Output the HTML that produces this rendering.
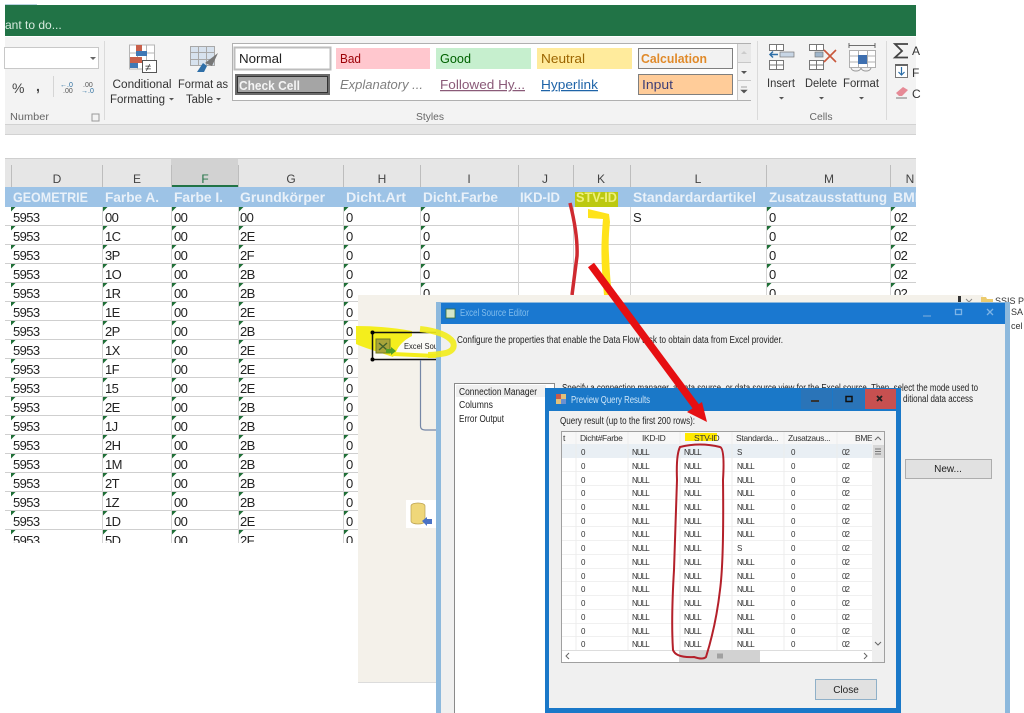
<!DOCTYPE html>
<html><head><meta charset="utf-8"><style>
html,body{margin:0;padding:0;background:#fff;width:1024px;height:713px;overflow:hidden}
svg{display:block;filter:blur(.3px)}
text{font-family:"Liberation Sans",sans-serif}
.c{font-size:13px;fill:#222;letter-spacing:-.6px}
.h{font-size:14px;font-weight:bold;fill:#e9f1f9}
.l{font-size:12px;fill:#444;text-anchor:middle}
.s{font-size:12.5px}
.g{font-size:8px;fill:#333;letter-spacing:-.9px}
.gh{font-size:8.5px;fill:#333;letter-spacing:-.35px}
.d{font-size:10px;fill:#222}
</style></head><body>
<svg width="1024" height="713" viewBox="0 0 1024 713" xmlns="http://www.w3.org/2000/svg">
<defs>
<pattern id="tri" x="0" y="207" width="6" height="19" patternUnits="userSpaceOnUse"><path d="M0 0h4.500L0 4.500z" fill="#1e6e36"/></pattern>
<clipPath id="xl"><path d="M0 0H916V295H358V543H0z"/></clipPath>
<clipPath id="tb"><rect x="562" y="432" width="310" height="218"/></clipPath>
</defs>
<rect width="1024" height="713" fill="#fff"/>
<!-- Excel -->
<rect x="5" y="5" width="911" height="31" fill="#217346"/>
<rect x="5" y="4" width="32" height="1" fill="#b9d3e0"/>
<text x="5" y="29" font-size="12" fill="#d8eadf">ant to do...</text>
<rect x="5" y="37" width="911" height="88" fill="#f3f3f3"/>
<rect x="5" y="125" width="911" height="10" fill="#e6e6e6"/>
<path d="M5 124.500H916M5 134.500H916" stroke="#d2d2d2"/>
<rect x="5" y="158" width="911" height="29" fill="#e6e6e6"/>
<path d="M5 158.500H916" stroke="#cfcfcf"/>
<!-- number group -->
<rect x="4.500" y="47.500" width="94" height="21" fill="#fff" stroke="#c8c8c8"/>
<path d="M90 57h6l-3 3z" fill="#666"/>
<text x="12" y="93" font-size="14" fill="#444">%</text>
<text x="36" y="91" font-size="14" font-weight="bold" fill="#444">,</text>
<path d="M53.500 76V97" stroke="#d5d5d5"/>
<text x="60" y="87" font-size="7" fill="#2a6d9e">←.0</text><text x="63" y="93" font-size="7" fill="#555">.00</text>
<text x="83" y="87" font-size="7" fill="#555">.00</text><text x="81" y="93" font-size="7" fill="#2a6d9e">→.0</text>
<text x="10" y="120" font-size="10.500" fill="#666" textLength="39" lengthAdjust="spacingAndGlyphs">Number</text>
<rect x="92" y="114" width="7" height="7" fill="none" stroke="#999"/>
<path d="M104.500 41V120" stroke="#dadada"/>
<!-- cond formatting icon -->
<path d="M129.500 45h25v24h-25zM129.500 53h25M129.500 61h25M137.500 45v24M146.500 45v24" fill="#fff" stroke="#b5b5b5"/>
<rect x="136" y="45" width="6" height="7" fill="#c9604a"/><rect x="136" y="51" width="11" height="5" fill="#3f78b5"/><rect x="130" y="57" width="12" height="6" fill="#c9604a"/><rect x="130" y="63" width="8" height="5" fill="#3f78b5"/>
<rect x="142.500" y="60.500" width="14" height="12" fill="#fff" stroke="#555"/>
<text x="145" y="71" font-size="11" fill="#333">≠</text>
<text x="142" y="88" font-size="11.500" fill="#333" text-anchor="middle" textLength="59" lengthAdjust="spacingAndGlyphs">Conditional</text>
<text x="110" y="103" font-size="11.500" fill="#333" textLength="55" lengthAdjust="spacingAndGlyphs">Formatting</text><path d="M169 98h5l-2.500 2.500z" fill="#555"/>
<!-- format as table icon -->
<path d="M190.500 46.500h24v19h-24zM190.500 52.500h24M190.500 59.500h24M198.500 46.500v19M206.500 46.500v19" fill="#d7e2ee" stroke="#a8a8a8"/>
<path d="M197 72l6-9 4 3-3 6z" fill="#2f6fa8"/><path d="M205 63l13-10-6 13z" fill="#777"/>
<text x="178" y="88" font-size="11.500" fill="#333" textLength="50" lengthAdjust="spacingAndGlyphs">Format as</text>
<text x="186" y="103" font-size="11.500" fill="#333" textLength="27" lengthAdjust="spacingAndGlyphs">Table</text><path d="M216 98h5l-2.500 2.500z" fill="#555"/>
<!-- gallery -->
<rect x="232.500" y="43.500" width="518" height="57" fill="#fff" stroke="#b0b0b0"/>
<rect x="234.500" y="47.500" width="96" height="22" fill="#fff" stroke="#bdbdbd" stroke-width="2"/>
<text x="239" y="63" class="s" fill="#222" textLength="43" lengthAdjust="spacingAndGlyphs">Normal</text>
<rect x="336" y="48" width="94" height="21" fill="#ffc7ce"/><text x="340" y="63" class="s" fill="#9c0006" textLength="21" lengthAdjust="spacingAndGlyphs">Bad</text>
<rect x="436" y="48" width="95" height="21" fill="#c6efce"/><text x="440" y="63" class="s" fill="#006100" textLength="31" lengthAdjust="spacingAndGlyphs">Good</text>
<rect x="537" y="48" width="95" height="21" fill="#ffeb9c"/><text x="541" y="63" class="s" fill="#9c6500" textLength="44" lengthAdjust="spacingAndGlyphs">Neutral</text>
<rect x="638.500" y="48.500" width="94" height="20" fill="#f2f2f2" stroke="#7f7f7f"/><text x="641" y="63" class="s" font-weight="bold" fill="#e08a2a" textLength="66" lengthAdjust="spacingAndGlyphs">Calculation</text>
<rect x="235" y="74" width="95" height="21" fill="#6b6b6b"/><rect x="237.500" y="76.500" width="90" height="16" fill="#a5a5a5" stroke="#333"/><text x="239" y="90" class="s" font-weight="bold" fill="#f4f4f4" textLength="61" lengthAdjust="spacingAndGlyphs">Check Cell</text>
<text x="340" y="89" class="s" font-style="italic" fill="#7f7f7f" textLength="83" lengthAdjust="spacingAndGlyphs">Explanatory ...</text>
<text x="440" y="89" class="s" fill="#8a5a78" text-decoration="underline" textLength="85" lengthAdjust="spacingAndGlyphs">Followed Hy...</text>
<text x="541" y="89" class="s" fill="#1f64a8" text-decoration="underline" textLength="57" lengthAdjust="spacingAndGlyphs">Hyperlink</text>
<rect x="638.500" y="74.500" width="94" height="20" fill="#ffcc99" stroke="#7f7f7f"/><text x="642" y="89" class="s" fill="#3f3f76" textLength="31" lengthAdjust="spacingAndGlyphs">Input</text>
<rect x="737" y="44" width="14" height="56" fill="#f3f3f3"/><path d="M737.500 44V100M737.500 62.500H751M737.500 80.500H751" stroke="#c8c8c8"/><rect x="738" y="44" width="13" height="18" fill="#e8e8e8"/>
<path d="M741 54l3-3 3 3z" fill="#ccc"/><path d="M741 71h6l-3 3z" fill="#555"/><path d="M741 87h6M741 90h6l-3 3z" fill="#555" stroke="#555" stroke-width=".6"/>
<text x="430" y="120" font-size="10.500" fill="#666" text-anchor="middle" textLength="28" lengthAdjust="spacingAndGlyphs">Styles</text>
<path d="M757.500 41V120" stroke="#dadada"/>
<!-- cells icons -->
<path d="M769.500 44.500h14v6h-14zM776.500 44.500v6M769.500 60.500h14v9h-14zM769.500 65h14M776.500 60.500v9" fill="#fff" stroke="#777"/>
<rect x="780" y="52" width="14" height="5" fill="#c8d6e5" stroke="#777" stroke-width=".7"/><path d="M770 54.500h8M773 51.500l-3 3 3 3" fill="none" stroke="#2f6fa8" stroke-width="1.500"/>
<path d="M809.500 44.500h14v6h-14zM816.500 44.500v6M809.500 60.500h14v9h-14zM816.500 60.500v9M809.500 65h14" fill="#fff" stroke="#777"/>
<rect x="815" y="52" width="8" height="5" fill="#9fb6cc" stroke="#777" stroke-width=".7"/><path d="M824 50l12 12M836 50l-12 12" stroke="#c9583c" stroke-width="1.600"/>
<path d="M849.500 50.500h26v17h-26zM849.500 56h26M849.500 62h26M858.500 50.500v17M867.500 50.500v17" fill="#fff" stroke="#b0b0b0"/>
<rect x="858" y="55" width="9" height="9" fill="#3f70b0"/><path d="M849 45.500h26M849 43v5M875 43v5" stroke="#444" fill="none" stroke-width=".8"/>
<path d="M851 68c1 4 9 4 10 0M861 68c1 4 9 4 10 0" fill="none" stroke="#999"/>
<text x="781" y="87" font-size="11.500" fill="#333" text-anchor="middle" textLength="28" lengthAdjust="spacingAndGlyphs">Insert</text>
<text x="821" y="87" font-size="11.500" fill="#333" text-anchor="middle" textLength="32" lengthAdjust="spacingAndGlyphs">Delete</text>
<text x="861" y="87" font-size="11.500" fill="#333" text-anchor="middle" textLength="36" lengthAdjust="spacingAndGlyphs">Format</text>
<path d="M779 97h5l-2.500 2.500zM819 97h5l-2.500 2.500zM859 97h5l-2.500 2.500z" fill="#555"/>
<text x="821" y="120" font-size="10.500" fill="#666" text-anchor="middle" textLength="23" lengthAdjust="spacingAndGlyphs">Cells</text>
<path d="M886.500 41V120" stroke="#dadada"/>
<path d="M908 44h-13l7 7-7 6.500h13" fill="none" stroke="#444" stroke-width="1.800"/>
<text x="912" y="55" font-size="12" fill="#333">A</text>
<rect x="895.500" y="64.500" width="12" height="13" fill="#fff" stroke="#777"/><rect x="895" y="64" width="13" height="2" fill="#666"/><path d="M901.500 67v8M898.500 72l3 3 3-3" fill="none" stroke="#2a6da8" stroke-width="1.200"/>
<text x="912" y="77" font-size="12" fill="#333">F</text>
<path d="M896 93l7-6 5 3-6 6h-3z" fill="#e68a96"/><path d="M896 98h11" stroke="#777"/>
<text x="912" y="98" font-size="12" fill="#333">C</text>
<!-- sheet -->
<g clip-path="url(#xl)">
<rect x="171" y="159" width="67" height="27" fill="#d2d2d2"/><rect x="171" y="185" width="67" height="2" fill="#217346"/>
<path d="M11.500 165V187M102.500 165V187M171.500 165V187M238.500 165V187M343.500 165V187M420.500 165V187M518.500 165V187M573.500 165V187M630.500 165V187M766.500 165V187M890.500 165V187" stroke="#bdbdbd"/>
<g class="l">
<text x="57" y="183">D</text><text x="137" y="183">E</text><text x="205" y="183" fill="#217346">F</text><text x="291" y="183">G</text><text x="382" y="183">H</text><text x="469" y="183">I</text><text x="545" y="183">J</text><text x="601" y="183">K</text><text x="698" y="183">L</text><text x="829" y="183">M</text><text x="910" y="183">N</text>
</g>
<rect x="5" y="187" width="911" height="20" fill="#9dc3e6"/>
<rect x="575" y="192" width="43" height="15" fill="#bcc910"/>
<g class="h">
<text x="13" y="202" textLength="75" lengthAdjust="spacingAndGlyphs">GEOMETRIE</text>
<text x="105" y="202" textLength="54" lengthAdjust="spacingAndGlyphs">Farbe A.</text>
<text x="174" y="202" textLength="49" lengthAdjust="spacingAndGlyphs">Farbe I.</text>
<text x="240" y="202" textLength="85" lengthAdjust="spacingAndGlyphs">Grundkörper</text>
<text x="346" y="202" textLength="60" lengthAdjust="spacingAndGlyphs">Dicht.Art</text>
<text x="423" y="202" textLength="75" lengthAdjust="spacingAndGlyphs">Dicht.Farbe</text>
<text x="520" y="202" textLength="40" lengthAdjust="spacingAndGlyphs">IKD-ID</text>
<text x="576" y="202" textLength="41" lengthAdjust="spacingAndGlyphs" style="fill:#eef07a">STV-ID</text>
<text x="633" y="202" textLength="123" lengthAdjust="spacingAndGlyphs">Standardardartikel</text>
<text x="769" y="202" textLength="118" lengthAdjust="spacingAndGlyphs">Zusatzausstattung</text>
<text x="893" y="202">BME</text>
</g>
<path d="M5 225.500H916M5 244.500H916M5 263.500H916M5 282.500H916M5 301.500H916M5 320.500H916M5 339.500H916M5 358.500H916M5 377.500H916M5 396.500H916M5 415.500H916M5 434.500H916M5 453.500H916M5 472.500H916M5 491.500H916M5 510.500H916M5 529.500H916" stroke="#cfcfcf"/>
<path d="M102.500 207V550M171.500 207V550M238.500 207V550M343.500 207V550M420.500 207V550M518.500 207V550M573.500 207V550M630.500 207V550M766.500 207V550M890.500 207V550" stroke="#d4d4d4"/>
<rect transform="translate(11 0)" y="207" width="5" height="340" fill="url(#tri)"/><rect transform="translate(103 0)" y="207" width="5" height="340" fill="url(#tri)"/><rect transform="translate(172 0)" y="207" width="5" height="340" fill="url(#tri)"/><rect transform="translate(239 0)" y="207" width="5" height="340" fill="url(#tri)"/><rect transform="translate(344 0)" y="207" width="5" height="340" fill="url(#tri)"/><rect transform="translate(421 0)" y="207" width="5" height="340" fill="url(#tri)"/><rect transform="translate(767 0)" y="207" width="5" height="340" fill="url(#tri)"/><rect transform="translate(891 0)" y="207" width="5" height="340" fill="url(#tri)"/>
<g class="c">
<text y="222"><tspan x="13">5953</tspan><tspan x="105">00</tspan><tspan x="174">00</tspan><tspan x="240">00</tspan><tspan x="346">0</tspan><tspan x="423">0</tspan><tspan x="633">S</tspan><tspan x="769">0</tspan><tspan x="894">02</tspan></text>
<text y="241"><tspan x="13">5953</tspan><tspan x="105">1C</tspan><tspan x="174">00</tspan><tspan x="240">2E</tspan><tspan x="346">0</tspan><tspan x="423">0</tspan><tspan x="769">0</tspan><tspan x="894">02</tspan></text>
<text y="260"><tspan x="13">5953</tspan><tspan x="105">3P</tspan><tspan x="174">00</tspan><tspan x="240">2F</tspan><tspan x="346">0</tspan><tspan x="423">0</tspan><tspan x="769">0</tspan><tspan x="894">02</tspan></text>
<text y="279"><tspan x="13">5953</tspan><tspan x="105">1O</tspan><tspan x="174">00</tspan><tspan x="240">2B</tspan><tspan x="346">0</tspan><tspan x="423">0</tspan><tspan x="769">0</tspan><tspan x="894">02</tspan></text>
<text y="298"><tspan x="13">5953</tspan><tspan x="105">1R</tspan><tspan x="174">00</tspan><tspan x="240">2B</tspan><tspan x="346">0</tspan><tspan x="423">0</tspan><tspan x="769">0</tspan><tspan x="894">02</tspan></text>
<text y="317"><tspan x="13">5953</tspan><tspan x="105">1E</tspan><tspan x="174">00</tspan><tspan x="240">2E</tspan><tspan x="346">0</tspan></text>
<text y="336"><tspan x="13">5953</tspan><tspan x="105">2P</tspan><tspan x="174">00</tspan><tspan x="240">2B</tspan><tspan x="346">0</tspan></text>
<text y="355"><tspan x="13">5953</tspan><tspan x="105">1X</tspan><tspan x="174">00</tspan><tspan x="240">2E</tspan><tspan x="346">0</tspan></text>
<text y="374"><tspan x="13">5953</tspan><tspan x="105">1F</tspan><tspan x="174">00</tspan><tspan x="240">2E</tspan><tspan x="346">0</tspan></text>
<text y="393"><tspan x="13">5953</tspan><tspan x="105">15</tspan><tspan x="174">00</tspan><tspan x="240">2E</tspan><tspan x="346">0</tspan></text>
<text y="412"><tspan x="13">5953</tspan><tspan x="105">2E</tspan><tspan x="174">00</tspan><tspan x="240">2B</tspan><tspan x="346">0</tspan></text>
<text y="431"><tspan x="13">5953</tspan><tspan x="105">1J</tspan><tspan x="174">00</tspan><tspan x="240">2B</tspan><tspan x="346">0</tspan></text>
<text y="450"><tspan x="13">5953</tspan><tspan x="105">2H</tspan><tspan x="174">00</tspan><tspan x="240">2B</tspan><tspan x="346">0</tspan></text>
<text y="469"><tspan x="13">5953</tspan><tspan x="105">1M</tspan><tspan x="174">00</tspan><tspan x="240">2B</tspan><tspan x="346">0</tspan></text>
<text y="488"><tspan x="13">5953</tspan><tspan x="105">2T</tspan><tspan x="174">00</tspan><tspan x="240">2B</tspan><tspan x="346">0</tspan></text>
<text y="507"><tspan x="13">5953</tspan><tspan x="105">1Z</tspan><tspan x="174">00</tspan><tspan x="240">2B</tspan><tspan x="346">0</tspan></text>
<text y="526"><tspan x="13">5953</tspan><tspan x="105">1D</tspan><tspan x="174">00</tspan><tspan x="240">2E</tspan><tspan x="346">0</tspan></text>
<text y="545"><tspan x="13">5953</tspan><tspan x="105">5D</tspan><tspan x="174">00</tspan><tspan x="240">2F</tspan><tspan x="346">0</tspan></text>
</g>
</g>
<!-- yellow/red marks on sheet -->
<path d="M588 209L609 214L610 222Q608 240 609 255Q610 280 612 295H604Q601 265 601.500 245Q602 230 603 219L588 218Z" fill="#ffe31a"/>
<path d="M570 203Q578 235 577 256L572 295" fill="none" stroke="#cf2a30" stroke-width="3.500"/>
<!-- SSIS background -->
<rect x="358" y="295" width="625" height="388" fill="#f4f1ea"/>
<path d="M358 682.500H436" stroke="#dcdcdc"/>
<rect x="958" y="296" width="3" height="9" fill="#333"/><path d="M966 299l3 3 3-3" fill="none" stroke="#888"/>
<path d="M981 297h5l1 2h6v6h-12z" fill="#eccb6e"/>
<text x="995" y="304" font-size="9" fill="#333">SSIS Pa</text><text x="1011" y="315" font-size="9" fill="#333">SA</text><text x="1011" y="329" font-size="9" fill="#333">cel</text>
<!-- node -->
<rect x="372" y="333" width="64" height="27" fill="#fbfbf6"/>
<path d="M356 326Q385 326 412 331L412 336Q400 342 396 352L393 357L372 350Q360 346 356 344Z" fill="#f4ee1c"/>
<path d="M393 352L436 354V358L393 356Z" fill="#f4ee1c"/>
<path d="M372.500 332.500H436M372.500 332.500V359.500H436" fill="none" stroke="#111" stroke-width="1.500"/>
<circle cx="372.500" cy="332.500" r="2" fill="#000"/><circle cx="372.500" cy="359.500" r="2" fill="#000"/>
<rect x="376" y="339" width="14" height="14" fill="#a9a53a" stroke="#6f7a25"/><path d="M379 343l8 7M387 343l-8 7" stroke="#41602a" stroke-width="1.300"/>
<path d="M386 349h5v-2l5 4-5 4v-2h-5z" fill="#4f9e28"/>
<text x="404" y="349" font-size="8.500" fill="#222" textLength="34" lengthAdjust="spacingAndGlyphs">Excel Sou</text>
<path d="M420.500 360V426Q420.500 430 425 430H438" fill="none" stroke="#7587a6" stroke-width="1.200"/>
<rect x="406" y="500" width="32" height="28" fill="#fff"/>
<path d="M411 506c0-4 14-4 14 0v15c0 4-14 4-14 0z" fill="#efd77a" stroke="#b9a050" stroke-width=".7"/>
<path d="M422 521l5-4v2h5v5h-5v2z" fill="#4a72c4"/>
<!-- Editor -->
<rect x="436" y="302" width="574" height="411" fill="#8db9dd"/>
<rect x="441" y="324" width="564" height="389" fill="#f0f0f0"/>
<rect x="441" y="303" width="564" height="21" fill="#1a78d0"/>
<rect x="446" y="309" width="9" height="9" fill="#d4e6c8" stroke="#37703a" stroke-width=".8"/>
<text x="460" y="316" font-size="10" fill="#82bdec" textLength="69" lengthAdjust="spacingAndGlyphs">Excel Source Editor</text>
<path d="M923 316h8" stroke="#5f9ed8" stroke-width="1.500"/><rect x="955.500" y="309.500" width="6" height="5" fill="none" stroke="#7db4e6" stroke-width="1.300"/><path d="M987 309l6 6M993 309l-6 6" stroke="#7db4e6" stroke-width="1.300"/>
<text x="457" y="343" class="d" textLength="326" lengthAdjust="spacingAndGlyphs">Configure the properties that enable the Data Flow task to obtain data from Excel provider.</text>
<rect x="454.500" y="383.500" width="100" height="340" fill="#fff" stroke="#8a8a8a"/>
<rect x="456" y="385" width="90" height="12" fill="#f0f0f0"/>
<text x="459" y="395" class="d" textLength="78" lengthAdjust="spacingAndGlyphs">Connection Manager</text>
<text x="459" y="408" class="d" textLength="34" lengthAdjust="spacingAndGlyphs">Columns</text>
<text x="459" y="422" class="d" textLength="45" lengthAdjust="spacingAndGlyphs">Error Output</text>
<text x="562" y="391" class="d" textLength="416" lengthAdjust="spacingAndGlyphs">Specify a connection manager, a data source, or data source view for the Excel source. Then, select the mode used to</text>
<text x="903" y="402" class="d" textLength="70" lengthAdjust="spacingAndGlyphs">ditional data access</text>
<rect x="905.500" y="459.500" width="86" height="19" fill="#e1e1e1" stroke="#adadad"/>
<text x="948" y="472" class="d" text-anchor="middle">New...</text>
<!-- yellow loop over editor border -->
<path d="M420 329Q446 332 453 342Q456 350 446 353Q436 355 428 355" fill="none" stroke="#f2ec1a" stroke-width="6" opacity=".9"/>
<!-- Preview -->
<rect x="545" y="388" width="356" height="325" fill="#1a78c8"/>
<rect x="549" y="411" width="347" height="297" fill="#f0f0f0"/>
<rect x="801" y="389" width="31" height="20" fill="#2a74b8"/><rect x="833" y="389" width="31" height="20" fill="#2a74b8"/><rect x="865" y="389" width="31" height="20" fill="#c75050"/>
<path d="M811 401h8" stroke="#333" stroke-width="2"/><rect x="846" y="396.500" width="6" height="5" fill="none" stroke="#111" stroke-width="1.500"/><path d="M877 396l5 5M882 396l-5 5" stroke="#222" stroke-width="1.800"/>
<rect x="556" y="394" width="10" height="10" fill="#e0c07a"/><rect x="556" y="394" width="5" height="5" fill="#c95a4a"/><rect x="561" y="399" width="5" height="5" fill="#6a90d0"/>
<text x="571" y="403" font-size="10.500" fill="#cfe6f8" textLength="79" lengthAdjust="spacingAndGlyphs">Preview Query Results</text>
<text x="560" y="424" class="d" textLength="135" lengthAdjust="spacingAndGlyphs">Query result (up to the first 200 rows):</text>
<rect x="561.500" y="431.500" width="323" height="231" fill="#fff" stroke="#a0a0a0"/>
<rect x="562" y="432" width="310" height="12" fill="#f7f7f7"/>
<rect x="562" y="444" width="310" height="14" fill="#e9eff4"/>
<path d="M562 471.500H872M562 485.500H872M562 499.500H872M562 513.500H872M562 526.500H872M562 540.500H872M562 554.500H872M562 568.500H872M562 581.500H872M562 595.500H872M562 609.500H872M562 623.500H872M562 636.500H872" stroke="#f0f0f0"/>
<path d="M576 432V650M628 432V650M680 432V650M732 432V650M784 432V650M837 432V650" stroke="#ececec"/>
<rect x="685" y="433" width="32" height="8" fill="#ffe800"/>
<g clip-path="url(#tb)">
<text y="441" class="gh"><tspan x="563">t</tspan><tspan x="580">Dicht#Farbe</tspan><tspan x="642">IKD-ID</tspan><tspan x="694">STV-ID</tspan><tspan x="736">Standarda...</tspan><tspan x="788">Zusatzaus...</tspan><tspan x="855">BME</tspan></text>
<g class="g">
<text y="455"><tspan x="581">0</tspan><tspan x="632">NULL</tspan><tspan x="684">NULL</tspan><tspan x="737">S</tspan><tspan x="791">0</tspan><tspan x="842">02</tspan></text>
<text y="469"><tspan x="581">0</tspan><tspan x="632">NULL</tspan><tspan x="684">NULL</tspan><tspan x="737">NULL</tspan><tspan x="791">0</tspan><tspan x="842">02</tspan></text>
<text y="483"><tspan x="581">0</tspan><tspan x="632">NULL</tspan><tspan x="684">NULL</tspan><tspan x="737">NULL</tspan><tspan x="791">0</tspan><tspan x="842">02</tspan></text>
<text y="496"><tspan x="581">0</tspan><tspan x="632">NULL</tspan><tspan x="684">NULL</tspan><tspan x="737">NULL</tspan><tspan x="791">0</tspan><tspan x="842">02</tspan></text>
<text y="510"><tspan x="581">0</tspan><tspan x="632">NULL</tspan><tspan x="684">NULL</tspan><tspan x="737">NULL</tspan><tspan x="791">0</tspan><tspan x="842">02</tspan></text>
<text y="524"><tspan x="581">0</tspan><tspan x="632">NULL</tspan><tspan x="684">NULL</tspan><tspan x="737">NULL</tspan><tspan x="791">0</tspan><tspan x="842">02</tspan></text>
<text y="537"><tspan x="581">0</tspan><tspan x="632">NULL</tspan><tspan x="684">NULL</tspan><tspan x="737">NULL</tspan><tspan x="791">0</tspan><tspan x="842">02</tspan></text>
<text y="551"><tspan x="581">0</tspan><tspan x="632">NULL</tspan><tspan x="684">NULL</tspan><tspan x="737">S</tspan><tspan x="791">0</tspan><tspan x="842">02</tspan></text>
<text y="565"><tspan x="581">0</tspan><tspan x="632">NULL</tspan><tspan x="684">NULL</tspan><tspan x="737">NULL</tspan><tspan x="791">0</tspan><tspan x="842">02</tspan></text>
<text y="579"><tspan x="581">0</tspan><tspan x="632">NULL</tspan><tspan x="684">NULL</tspan><tspan x="737">NULL</tspan><tspan x="791">0</tspan><tspan x="842">02</tspan></text>
<text y="592"><tspan x="581">0</tspan><tspan x="632">NULL</tspan><tspan x="684">NULL</tspan><tspan x="737">NULL</tspan><tspan x="791">0</tspan><tspan x="842">02</tspan></text>
<text y="606"><tspan x="581">0</tspan><tspan x="632">NULL</tspan><tspan x="684">NULL</tspan><tspan x="737">NULL</tspan><tspan x="791">0</tspan><tspan x="842">02</tspan></text>
<text y="620"><tspan x="581">0</tspan><tspan x="632">NULL</tspan><tspan x="684">NULL</tspan><tspan x="737">NULL</tspan><tspan x="791">0</tspan><tspan x="842">02</tspan></text>
<text y="634"><tspan x="581">0</tspan><tspan x="632">NULL</tspan><tspan x="684">NULL</tspan><tspan x="737">NULL</tspan><tspan x="791">0</tspan><tspan x="842">02</tspan></text>
<text y="647"><tspan x="581">0</tspan><tspan x="632">NULL</tspan><tspan x="684">NULL</tspan><tspan x="737">NULL</tspan><tspan x="791">0</tspan><tspan x="842">02</tspan></text>
</g>
</g>
<!-- grid scrollbars -->
<rect x="872" y="432" width="12" height="218" fill="#f0f0f0"/>
<rect x="873" y="445" width="11" height="13" fill="#d8d8d8"/><path d="M875 449h6M875 451.500h6M875 454h6" stroke="#555" stroke-width=".7"/>
<path d="M875 440l3-3 3 3M875 642l3 3 3-3" fill="none" stroke="#666"/>
<rect x="562" y="650" width="322" height="12" fill="#fff"/><path d="M562 650.500H884" stroke="#ddd"/>
<rect x="679" y="650" width="81" height="12" fill="#d2d2d2"/><path d="M718 653.500v5M720 653.500v5M722 653.500v5" stroke="#555" stroke-width=".8"/>
<path d="M569 653l-3 3 3 3M864 653l3 3-3 3" fill="none" stroke="#666"/>
<rect x="872" y="650" width="12" height="12" fill="#eee"/>
<rect x="815.500" y="679.500" width="61" height="20" fill="#e1e1e1" stroke="#8fb0c8"/>
<text x="846" y="693" font-size="10" fill="#222" text-anchor="middle">Close</text>
<!-- red oval -->
<path d="M680 447Q700 442 720 447Q725 448 723 480Q724 560 720 590Q716 625 706 657Q703 660 694 657Q676 658 673 650Q671 620 674 570Q676 510 677 480Q676 455 680 447Z" fill="none" stroke="#b4202a" stroke-width="2"/>
<!-- red arrow (on top of the dialogs) -->
<path d="M591 265L697 408" stroke="#e60f12" stroke-width="7.500"/>
<path d="M707 422L687 412L702 402Z" fill="#e60f12"/>
</svg>
</body></html>
